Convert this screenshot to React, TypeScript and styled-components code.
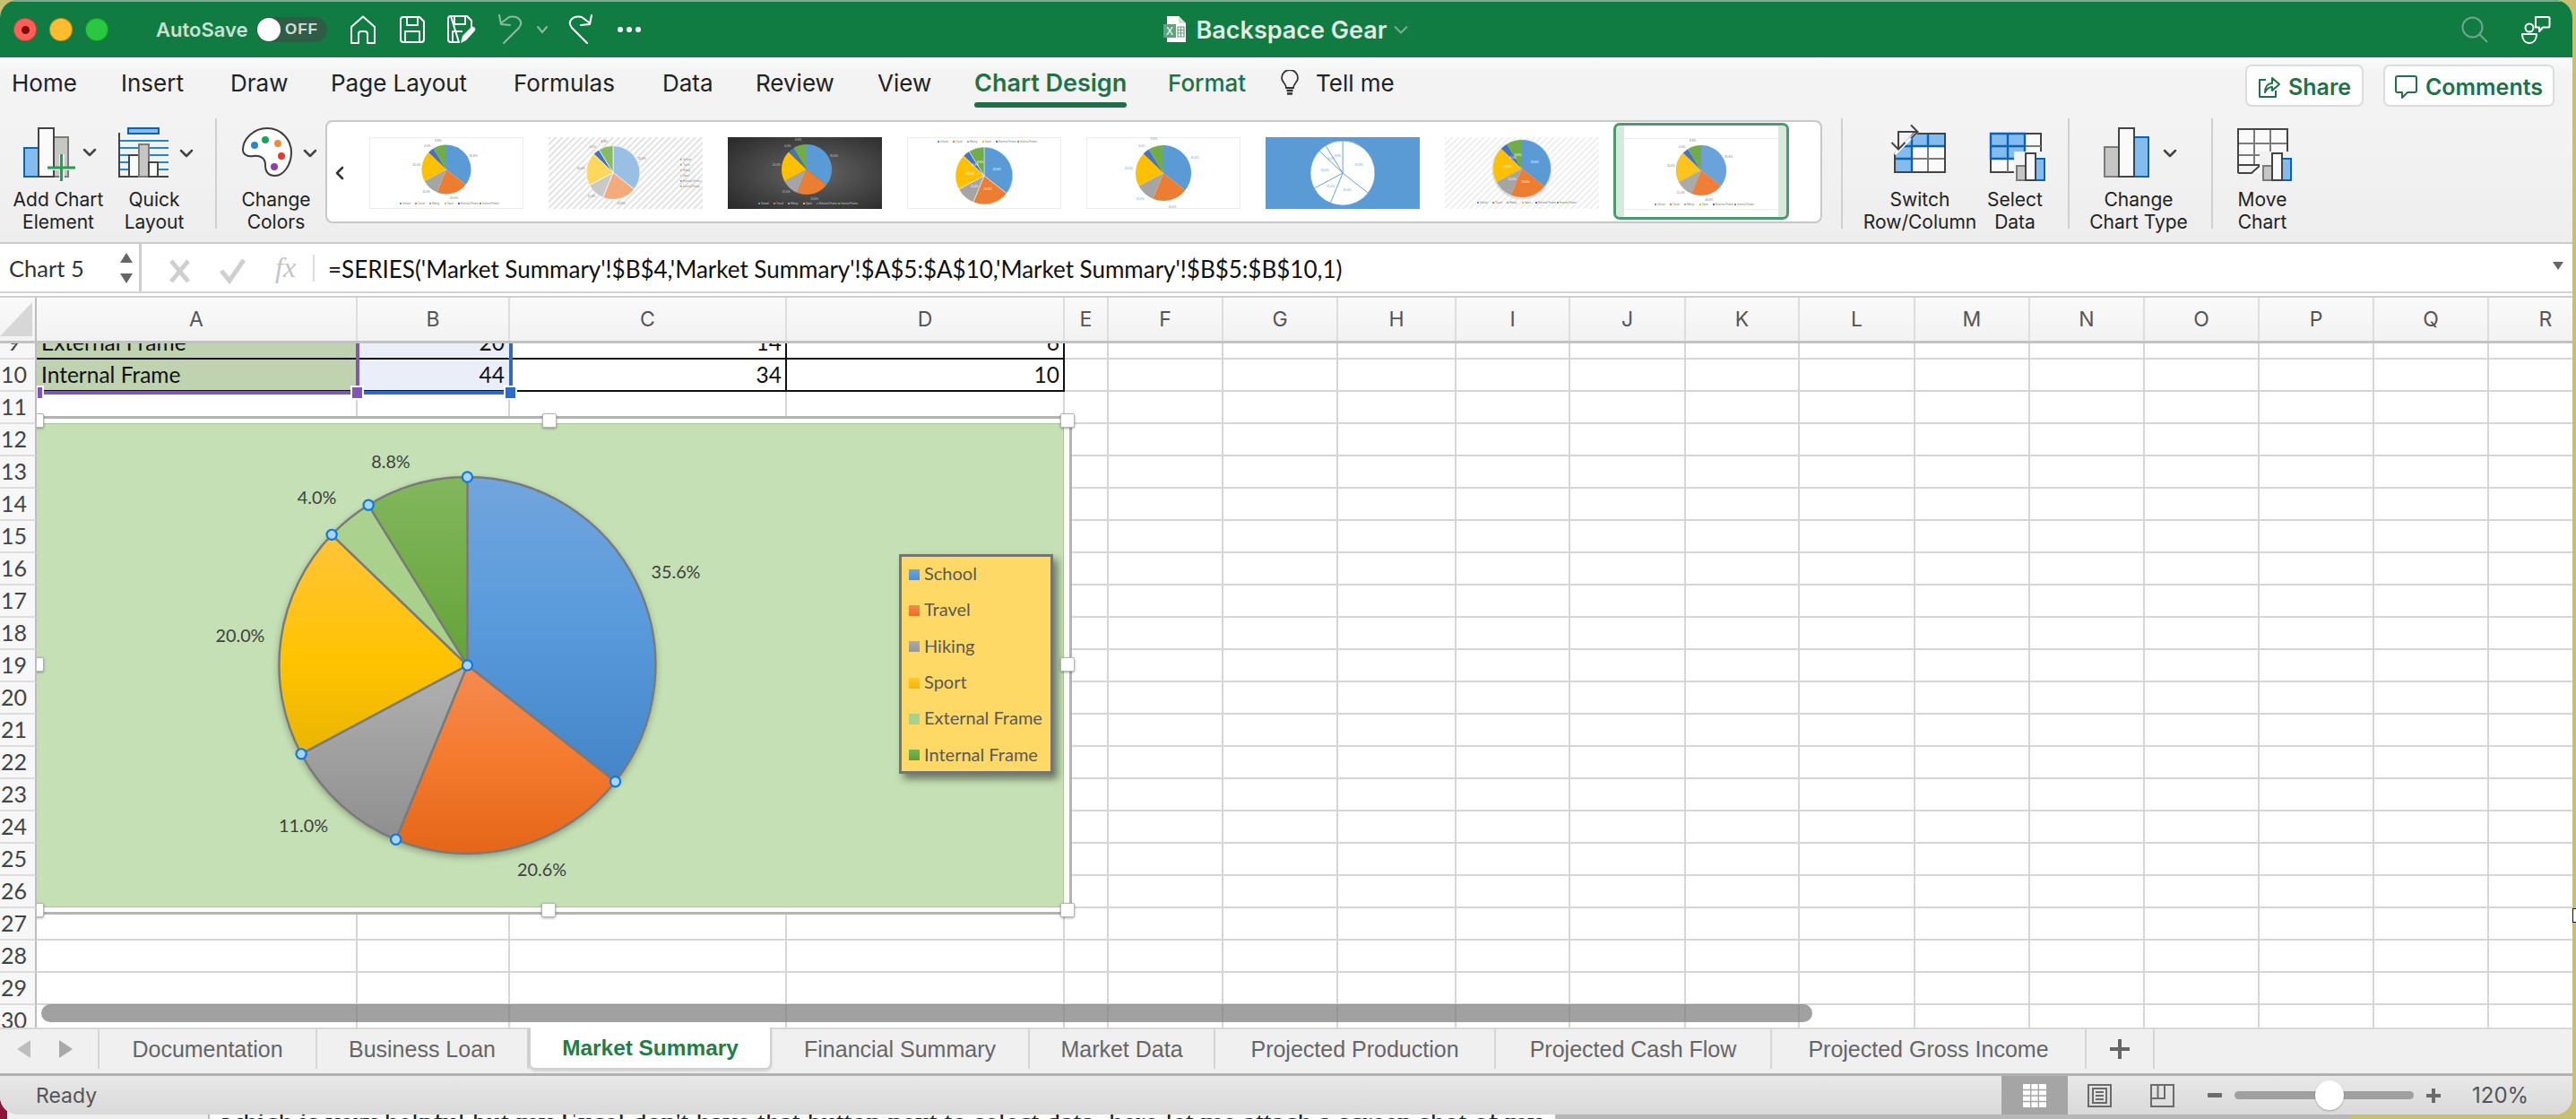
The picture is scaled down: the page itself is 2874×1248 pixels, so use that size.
import React from 'react';
import styled, { createGlobalStyle } from 'styled-components';

const Global = createGlobalStyle`
  html, body { margin: 0; padding: 0; background: #c9bf70; }
  * { box-sizing: border-box; }
  #root { width: 2874px; height: 1248px; }
`;

const UI = `Inter, "Liberation Sans", sans-serif`;
const HELV = `"Liberation Sans", Arial, sans-serif`;
const CAL = `Lato, "Open Sans", sans-serif`;
const GREEN = '#107c41';

const COLS: [string, number][] = [['A', 358], ['B', 170], ['C', 309], ['D', 310], ['E', 49], ['F', 128], ['G', 128], ['H', 132], ['I', 127], ['J', 129], ['K', 127], ['L', 129], ['M', 128], ['N', 128], ['O', 128], ['P', 128], ['Q', 128], ['R', 128]];
const TEMPLATE = `41px ${COLS.map(c => c[1] + 'px').join(' ')}`;

const Page = styled.div`
  position: relative; width: 2874px; height: 1248px; overflow: hidden; background: #c9bf70;
`;
const EdgeMark = styled.div`
  position: absolute; left: 2870px; top: 1013px; width: 4px; height: 16px; border: 1px solid #111; border-right: none; background: #fff;
`;
const DocStrip = styled.div`
  position: absolute; left: 0; top: 1226px; width: 2621px; height: 22px; background: #fff; overflow: hidden;
  font: 32px/32px "Liberation Serif", serif; color: #222; white-space: nowrap;
`;
const DocLeft = styled.div`
  position: absolute; left: 0; top: 0; bottom: 0; width: 234px; background: #efefef; border-right: 2px solid #bbb;
  &::before { content: ''; position: absolute; left: 0; top: 0; bottom: 0; width: 8px; background: #8a1538; }
`;
const DocRight = styled.div`
  position: absolute; left: 1735px; right: 0; top: 0; bottom: 0; background: #b8b8b8;
`;
const DocText = styled.div`
  position: absolute; left: 248px; top: 9px;
`;
const Win = styled.div`
  position: relative; z-index: 1; width: 2870px; height: 1243px; border-radius: 20px; overflow: hidden;
  display: flex; flex-direction: column; background: #f3f3f3;
`;

/* Title bar */
const TitleBar = styled.div`
  height: 64px; flex: none; background: ${GREEN}; border-top: 2px solid #7ea892;
  display: grid; grid-template-columns: 1fr auto 1fr; align-items: center;
`;
const TitleLeft = styled.div`display: flex; align-items: center; padding-left: 15px;`;
const TitleCenter = styled.div`display: flex; align-items: center; gap: 10px;`;
const TitleRight = styled.div`display: flex; align-items: center; justify-content: flex-end; gap: 36px; padding-right: 24px;`;
const Light = styled.span<{ $c: string; $ml?: number }>`
  width: 26px; height: 26px; border-radius: 50%; background: ${p => p.$c}; margin-left: ${p => p.$ml ?? 14}px;
  border: 1px solid rgba(0,0,0,.25); display: flex; align-items: center; justify-content: center; flex: none;
`;
const LightDot = styled.span`width: 9px; height: 9px; border-radius: 50%; background: #7c0f0c;`;
const AutoSave = styled.span`
  margin-left: 53px; font: 600 22px ${UI}; color: rgba(255,255,255,.78); width: 112px;
`;
const Toggle = styled.span`
  width: 79px; height: 28px; border-radius: 14px; background: #2e5c45; display: flex; align-items: center;
  padding-left: 1px; gap: 5px; flex: none;
`;
const Knob = styled.span`width: 26px; height: 26px; border-radius: 50%; background: #fff;`;
const OffText = styled.span`font: 600 17px ${HELV}; color: rgba(255,255,255,.8); letter-spacing: 1px;`;
const QuickIcon = styled.svg<{ $ml: number }>`margin-left: ${p => p.$ml}px; flex: none; display: block;`;
const DocName = styled.span`font: 600 27px ${UI}; color: rgba(255,255,255,.88); margin-right: -4px;`;

/* Tabs */
const TabRow = styled.div`
  height: 66px; flex: none; display: flex; align-items: flex-start; padding: 14px 20px 0 13px;
  background: linear-gradient(#fafafa, #f3f3f3 30%);
`;
const Tab = styled.div<{ $w: number }>`width: ${p => p.$w}px; flex: none;`;
const TabText = styled.span<{ $active?: boolean; $green?: boolean }>`
  position: relative; display: inline-block; font: ${p => (p.$active ? 600 : p.$green ? 500 : 400)} ${p => (p.$active ? 27 : 26)}px/30px ${UI};
  color: ${p => (p.$active || p.$green ? '#1f7246' : '#222')}; white-space: nowrap;
  ${p => p.$active ? `&::after { content: ''; position: absolute; left: 0; right: 0; top: 36px; height: 6px; border-radius: 3px; background: #1f6f4a; }` : ''}
`;
const Bulb = styled.svg`margin-right: 18px; flex: none; display: block;`;
const Actions = styled.div`margin-left: auto; display: flex; gap: 22px; margin-top: -6px;`;
const ActionBtn = styled.button<{ $w: number }>`
  width: ${p => p.$w}px; height: 47px; background: #fff; border: 2px solid #dcdcdc; border-radius: 7px;
  font: 600 25px ${UI}; color: #1f7246; display: flex; align-items: center; justify-content: center; gap: 9px; padding: 2px 0 0;
`;

/* Ribbon */
const Ribbon = styled.div`
  height: 142px; flex: none; display: flex; align-items: flex-start; padding-left: 8px;
  background: linear-gradient(#f3f3f3, #eeeeee); border-bottom: 2px solid #cbcbcb;
`;
const RibBtn = styled.div<{ $w: number; $ml?: number }>`
  width: ${p => p.$w}px; margin-left: ${p => p.$ml ?? 0}px; flex: none; display: flex; flex-direction: column; align-items: center;
  padding-top: 6px;
`;
const RibLabel = styled.div`
  margin-top: 3px; font: 400 21px/24.5px ${UI}; color: #222; text-align: center; white-space: nowrap;
`;
const RibSep = styled.div<{ $ml: number }>`
  width: 2px; height: 123px; margin-top: 2px; background: #d0d0d0; margin-left: ${p => p.$ml}px; flex: none;
`;
const Gallery = styled.div`
  width: 1670px; height: 115px; margin: 4px 0 0 10px; flex: none; background: #fff; border: 2px solid #c8c8c8; border-radius: 8px;
  display: flex; align-items: center; padding-top: 3px;
`;
const GalleryBack = styled.svg`width: 47px; height: 24px; flex: none; display: block;`;
const Thumbs = styled.div`display: flex; gap: 28px; align-items: center;`;
const ThumbSvg = styled.svg`display: block; flex: none;`;
const SelectedThumb = styled.div`
  margin-left: -12px; height: 108px; margin-top: -4px; border: 3px solid #4a9a6f; border-radius: 7px; background: #d8e8dd; padding: 0 9px; flex: none;
`;
const SelectedInner = styled.div`height: 100%; background: #fff; display: flex; align-items: center; padding-top: 5px;`;

/* Formula bar */
const FormulaBar = styled.div`
  height: 60px; flex: none; display: flex; background: #fff; border-bottom: 2px solid #cfcfcf;
  box-shadow: inset 0 -3px 0 #fff, inset 0 -5px 0 #d4d4d4; padding-bottom: 5px;
`;
const NameBox = styled.div`
  width: 158px; flex: none; border-right: 3px solid #cdcdcd; display: flex; align-items: center; justify-content: space-between;
  padding: 0 6px 0 10px; font: 400 25.5px ${CAL}; color: #333;
`;
const Spin = styled.svg`display: block; flex: none;`;
const FxArea = styled.div`flex: none; width: 190px; margin-left: 3px;`;
const FxIcons = styled.svg`display: block;`;
const FormulaText = styled.div`
  flex: 1; margin-left: 15px; font: 400 26px/56px ${CAL}; color: #111; white-space: nowrap;
`;
const FormulaCaret = styled.svg`flex: none; margin: 20px 10px 0 0; display: block;`;

/* Sheet */
const Sheet = styled.div`
  position: relative; height: 814px; flex: none; overflow: hidden; background: #fff;
`;
const ColHeader = styled.div`
  display: grid; grid-template-columns: ${TEMPLATE}; height: 51px; background: linear-gradient(#fafafa, #f2f2f2); border-bottom: 3px solid #c2c2c2;
`;
const ColCell = styled.div`
  border-right: 2px solid #dedede; display: flex; align-items: center; justify-content: center;
  font: 400 23px ${UI}; color: #555;
`;
const Corner = styled.div`
  border-right: 2px solid #bdbdbd; position: relative;
  &::after { content: ''; position: absolute; left: 0; bottom: 5px; border-style: solid; border-width: 0 0 38px 36px; border-color: transparent transparent #d7d7d7 transparent; }
`;
const Body = styled.div`display: grid; grid-template-columns: ${TEMPLATE};`;
const RowNum = styled.div<{ $h: number }>`
  position: relative; z-index: 5;
  height: ${p => p.$h}px; background: #f7f7f7; border-right: 2px solid #bdbdbd; border-bottom: 2px solid #dcdcdc; display: flex; align-items: flex-end;
  overflow: hidden;
`;
const RowNumText = styled.span`
  width: 31px; height: 36px; flex: none; font: 400 25px/37px ${CAL}; color: #444; text-align: center;
`;
const Cell = styled.div<{ $h: number; $bg?: string; $bb?: string; $br?: string; $right?: boolean }>`
  height: ${p => p.$h}px; background: ${p => p.$bg ?? '#fff'};
  border-right: 2px solid ${p => p.$br ?? '#d6d6d6'}; border-bottom: 2px solid ${p => p.$bb ?? '#d6d6d6'};
  display: flex; align-items: flex-end; overflow: hidden; justify-content: ${p => (p.$right ? 'flex-end' : 'flex-start')};
  padding: 0 ${p => (p.$right ? 4 : 0)}px 0 ${p => (p.$right ? 0 : 5)}px;
`;
const CellText = styled.span`
  height: 36px; flex: none; font: 400 24.5px/37px ${CAL}; color: #111; white-space: nowrap;
`;
const Sel = styled.div<{ $c: string; $x: number; $y: number; $w: number; $h: number }>`
  position: absolute; left: ${p => p.$x}px; top: ${p => p.$y - 332}px; width: ${p => p.$w}px; height: ${p => p.$h}px; background: ${p => p.$c};
`;
const SelHandle = styled(Sel)`outline: 2px solid #fff; z-index: 3;`;
const ChartFrame = styled.div`
  position: absolute; left: 41px; top: 132px; width: 1155px; height: 556px; background: #fff; z-index: 2;
  border: 3px solid #b4b4b4; border-left: none; padding: 5px 6px 5px 0;
`;
const ChartArea = styled.div`
  position: relative; width: 100%; height: 100%; background: #c5e0b4; border: 1px solid #abc89a; border-left: none;
`;
const ChartSvg = styled.svg`position: absolute; left: 0; top: 0; display: block;`;
const PieShadow = styled.circle`filter: blur(4px);`;
const Legend = styled.div`
  position: absolute; left: 962px; top: 145px; width: 172px; height: 245px; background: #ffd966; border: 3px solid #757575;
  box-shadow: 5px 6px 8px rgba(0,0,0,.45); display: flex; flex-direction: column; padding-left: 8px;
`;
const LegendItem = styled.div`height: 40.3px; flex: none; padding-bottom: 4px; display: flex; align-items: center; gap: 5px; font: 400 20px ${CAL}; color: #595959; white-space: nowrap;`;
const Swatch = styled.span<{ $a: string; $b: string }>`width: 12px; height: 12px; flex: none; margin-top: 3px; background: linear-gradient(${p => p.$a}, ${p => p.$b});`;
const Handle = styled.div<{ $x: number; $y: number }>`
  position: absolute; left: ${p => p.$x - 8}px; top: ${p => p.$y - 332 - 8}px; width: 16px; height: 16px; background: #fff;
  border: 1px solid #b5b5b5; border-radius: 2px; box-shadow: 0 1px 3px rgba(0,0,0,.35); z-index: 4;
`;
const ScrollThumb = styled.div`
  position: absolute; left: 46px; top: 788px; width: 1976px; height: 20px; border-radius: 10px; background: rgba(125,125,125,.72); z-index: 6;
`;

/* Sheet tabs */
const SheetTabs = styled.div`
  height: 54px; flex: none; display: flex; background: #f0f0f0; border-top: 2px solid #d8d8d8; border-bottom: 3px solid #b2b2b2; padding-bottom: 5px;
`;
const TabNav = styled.div`width: 111px; flex: none; border-right: 2px solid #d6d6d6; display: flex; align-items: center;`;
const NavSvg = styled.svg`display: block;`;
const SheetTab = styled.div<{ $active?: boolean; $w: number }>`
  width: ${p => p.$w}px; flex: none; display: flex; align-items: center; justify-content: center; font: ${p => (p.$active ? 700 : 400)} ${p => (p.$active ? 24.4 : 25)}px ${HELV};
  color: ${p => (p.$active ? '#1e7e4a' : '#666')}; white-space: nowrap;
  ${p => p.$active
    ? `background:#fff; border:2px solid #cfcfcf; border-top:none; border-radius:0 0 7px 7px; height:47px; margin-top:-2px; box-shadow:0 2px 3px rgba(0,0,0,.12);`
    : `border-right:2px solid #d6d6d6;`}
`;

/* Status */
const StatusBar = styled.div`
  flex: 1; display: flex; align-items: center; background: linear-gradient(#e8e8e8, #d9d9d9);
  padding-left: 40px; font: 400 23px ${UI}; color: #555;
`;
const StatusRight = styled.div`margin-left: auto; display: flex; align-items: center; height: 100%;`;
const ViewActive = styled.div`width: 74px; height: 100%; background: #a5a5a5; display: flex; align-items: center; justify-content: center;`;
const ViewBtn = styled.div`width: 70px; height: 100%; display: flex; align-items: center; justify-content: center;`;
const ZoomMinus = styled.svg`margin-left: 16px; display: block;`;
const Track = styled.div`width: 200px; height: 9px; border-radius: 5px; background: #a0a0a0; position: relative; margin: 0 14px;`;
const Thumb = styled.div`position: absolute; left: 90px; top: -12px; width: 32px; height: 33px; border-radius: 50%; background: #fff; box-shadow: 0 1px 2px rgba(0,0,0,.25);`;
const Zoom = styled.span`margin-left: 35px; width: 112px; font: 400 24px ${UI};`;

/* ---------- helpers ---------- */
const FR = [0, 128.16, 202.32, 241.92, 313.92, 328.32, 360];
const pt = (cx: number, cy: number, r: number, a: number) => {
  const t = (a * Math.PI) / 180;
  return [cx + r * Math.sin(t), cy - r * Math.cos(t)];
};
const slice = (cx: number, cy: number, r: number, a0: number, a1: number) => {
  const [x0, y0] = pt(cx, cy, r, a0);
  const [x1, y1] = pt(cx, cy, r, a1);
  return `M${cx} ${cy}L${x0.toFixed(2)} ${y0.toFixed(2)}A${r} ${r} 0 ${a1 - a0 > 180 ? 1 : 0} 1 ${x1.toFixed(2)} ${y1.toFixed(2)}Z`;
};
const Chev = ({ x, y, c = '#444', s = 6, w = 2.5 }: { x: number; y: number; c?: string; s?: number; w?: number }) => (
  <path d={`M${x - s} ${y - s / 2}L${x} ${y + s / 2}L${x + s} ${y - s / 2}`} fill="none" stroke={c} strokeWidth={w} strokeLinecap="round" strokeLinejoin="round" />
);
const BLUE = '#83bcef', DBLUE = '#0f62b0', DARK = '#444', MID = '#7b7b7b', LG = '#c6c6c4', W = '#fafafa';
const B = ({ x, y, w, h, f, s }: { x: number; y: number; w: number; h: number; f: string; s: string }) => (
  <rect x={x} y={y} width={w} height={h} fill={f} stroke={s} strokeWidth={2} />
);

const LEG = ['School', 'Travel', 'Hiking', 'Sport', 'External Frame', 'Internal Frame'];
const BASE = ['#5b9bd5', '#ed7d31', '#a5a5a5', '#ffc000', '#4472c4', '#70ad47'];
const LEGX = [0, 17, 33, 50, 65, 89];

const MiniPie = ({ cx, cy, r, colors = BASE, stroke = 'none', sw = 0 }: { cx: number; cy: number; r: number; colors?: string[]; stroke?: string; sw?: number }) => (
  <g>
    {colors.map((c, i) => <path key={i} d={slice(cx, cy, r, FR[i], FR[i + 1])} fill={c} stroke={stroke} strokeWidth={sw} />)}
  </g>
);
const PCT = ['35.6%', '20.6%', '11.0%', '20.0%', '4.0%', '8.8%'];
const MiniLabels = ({ cx, cy, r, fill = '#777' }: { cx: number; cy: number; r: number; fill?: string }) => (
  <g fontFamily={HELV} fontSize="3.2" fill={fill} textAnchor="middle">
    {PCT.map((p, i) => {
      const [x, y] = pt(cx, cy, r + 6, (FR[i] + FR[i + 1]) / 2);
      return <text key={p} x={x} y={y + 1}>{p}</text>;
    })}
  </g>
);
const MiniLegendH = ({ x, y, fill = '#777', colors = BASE }: { x: number; y: number; fill?: string; colors?: string[] }) => (
  <g fontFamily={HELV} fontSize="2.9" fill={fill}>
    {LEG.map((l, i) => (
      <g key={l}>
        <rect x={x + LEGX[i]} y={y - 2} width={2} height={2} fill={colors[i]} />
        <text x={x + LEGX[i] + 3} y={y}>{l}</text>
      </g>
    ))}
  </g>
);
const MiniLegendV = ({ x, y }: { x: number; y: number }) => (
  <g fontFamily={HELV} fontSize="2.9" fill="#888">
    {LEG.map((l, i) => (
      <g key={l}>
        <rect x={x} y={y + i * 6 - 2} width={1.6} height={1.6} fill={BASE[i]} />
        <text x={x + 3} y={y + i * 6}>{l}</text>
      </g>
    ))}
  </g>
);

const Thumbnail = ({ kind }: { kind: number }) => {
  const hatchId = `hatch${kind}`;
  return (
    <ThumbSvg width={172} height={80} viewBox="0 0 172 80">
      <defs>
        <pattern id={hatchId} width="5" height="5" patternUnits="userSpaceOnUse" patternTransform="rotate(45)">
          <rect width="5" height="5" fill="#fff" />
          <rect width="2" height="5" fill={kind === 7 ? '#eeeeee' : '#e2e2e2'} />
        </pattern>
        <radialGradient id="dk" cx="55%" cy="50%" r="70%">
          <stop offset="0" stopColor="#666" />
          <stop offset="1" stopColor="#2b2b2b" />
        </radialGradient>
      </defs>
      {kind === 1 && (<>
        <rect x=".5" y=".5" width="171" height="79" fill="#fff" stroke="#ececec" />
        <MiniPie cx={86} cy={36} r={27.5} />
        <MiniLabels cx={86} cy={36} r={27.5} />
        <MiniLegendH x={34} y={75} />
      </>)}
      {kind === 2 && (<>
        <rect width="172" height="80" fill={`url(#${hatchId})`} />
        <MiniPie cx={72} cy={39.5} r={30} colors={['#99bfe5', '#f3ab7c', '#c9c9c9', '#ffd75a', '#4472c4', '#86bb60']} stroke="#fff" sw={.7} />
        <MiniLabels cx={72} cy={39.5} r={30} />
        <MiniLegendV x={147} y={26} />
      </>)}
      {kind === 3 && (<>
        <rect width="172" height="80" fill="url(#dk)" />
        <MiniPie cx={88} cy={36} r={28} />
        <MiniLabels cx={88} cy={36} r={28} fill="#ccc" />
        <MiniLegendH x={34} y={75} fill="#ccc" />
      </>)}
      {kind === 4 && (<>
        <rect x=".5" y=".5" width="171" height="79" fill="#fff" stroke="#ececec" />
        <MiniPie cx={86} cy={43} r={32} stroke="#fff" sw={.5} />
        <MiniLabels cx={86} cy={43} r={10} fill="#fff" />
        <MiniLegendH x={34} y={6} />
      </>)}
      {kind === 5 && (<>
        <rect x=".5" y=".5" width="171" height="79" fill="#fff" stroke="#ececec" />
        <MiniPie cx={86} cy={40} r={31} />
        <MiniLabels cx={86} cy={40} r={33} fill="#5b9bd5" />
      </>)}
      {kind === 6 && (<>
        <rect width="172" height="80" fill="#5b9bd5" />
        <MiniPie cx={86} cy={40} r={36} colors={['#fff', '#fff', '#fff', '#fff', '#fff', '#fff']} stroke="#5b9bd5" sw={.7} />
        <MiniLabels cx={86} cy={40} r={14} fill="#5b9bd5" />
      </>)}
      {kind === 7 && (<>
        <rect width="172" height="80" fill={`url(#${hatchId})`} />
        <circle cx="86" cy="36" r="33.5" fill="#bbb" opacity=".45" />
        <MiniPie cx={86} cy={35} r={32} />
        <MiniLabels cx={86} cy={35} r={10} fill="#fff" />
        <MiniLegendH x={36} y={74} />
      </>)}
      {kind === 8 && (<>
        <rect width="172" height="80" fill="#fff" />
        <path d="M0 .5H172M0 79.5H172" stroke="#ececec" />
        <MiniPie cx={86} cy={36} r={28} colors={['#6aa3dc', '#f07f35', '#aaa', '#ffc41c', '#4472c4', '#70ad47']} stroke="#999" sw={.3} />
        <MiniLabels cx={86} cy={36} r={28} />
        <MiniLegendH x={34} y={75} />
      </>)}
    </ThumbSvg>
  );
};

/* ---------- sheet data ---------- */
const ROWS = Array.from({ length: 22 }, (_, i) => i + 9);
const TABLE: Record<number, string[]> = { 9: ['External Frame', '20', '14', '6'], 10: ['Internal Frame', '44', '34', '10'] };
const BLACK = '#111';

const cellProps = (row: number, col: number) => {
  const p: { $bg?: string; $bb?: string; $br?: string; $right?: boolean } = {};
  if (TABLE[row] && col < 4) {
    p.$bb = BLACK;
    p.$right = col > 0;
    if (col === 0) { p.$bg = '#bfd3b0'; p.$br = '#bfd3b0'; }
    if (col === 1) { p.$bg = '#e9eef9'; p.$br = '#e9eef9'; }
    if (col >= 2) p.$br = BLACK;
  }
  return p;
};

const TABS: [string, number, boolean?][] = [
  ['Documentation', 243], ['Business Loan', 236], ['Market Summary', 271, true], ['Financial Summary', 288], ['Market Data', 207], ['Projected Production', 313], ['Projected Cash Flow', 308], ['Projected Gross Income', 351],
];

const PIE_CX = 521.4, PIE_CY = 742, PIE_R = 210;
const PIE_FILLS = ['pb', 'po', 'pg', 'py', 'pl', 'pd'];

export default function App() {
  return (
    <Page>
      <Global />
      <EdgeMark />
      <DocStrip>
        <DocLeft />
        <DocRight />
        <DocText>which is very helpful but my Excel don't have that button next to select data, here let me attach a screen shot of my</DocText>
      </DocStrip>
      <Win>
        <TitleBar>
          <TitleLeft>
            <Light $c="#ff5f57" $ml={0}><LightDot /></Light>
            <Light $c="#febc2e" />
            <Light $c="#28c840" />
            <AutoSave>AutoSave</AutoSave>
            <Toggle><Knob /><OffText>OFF</OffText></Toggle>
            <QuickIcon $ml={25} width={30} height={32} viewBox="0 0 30 32" fill="none" stroke="#fff" strokeWidth="2" strokeLinejoin="round">
              <path d="M2 31V13L15 1.5 28 13V31H20V21a3 3 0 0 0-3-3h-4a3 3 0 0 0-3 3V31Z" />
            </QuickIcon>
            <QuickIcon $ml={26} width={28} height={30} viewBox="0 0 28 30" fill="none" stroke="#fff" strokeWidth="2" strokeLinejoin="round">
              <path d="M4 1H22L27 6V26a3 3 0 0 1-3 3H4a3 3 0 0 1-3-3V4a3 3 0 0 1 3-3Z" />
              <path d="M8 1V10H20V1M6 29V17H22V29" />
            </QuickIcon>
            <QuickIcon $ml={25} width={32} height={32} viewBox="0 0 32 32" fill="none" stroke="#fff" strokeWidth="2" strokeLinejoin="round">
              <path d="M4 1H22L27 6V14M13 30H4a3 3 0 0 1-3-3V4a3 3 0 0 1 3-3Z" />
              <path d="M8 1V10H20V1M6 30V18H17" />
              <path d="M15 31l2-8L27 13a3 3 0 0 1 4 4L21 28Z" fill="#fff" stroke="none" />
            </QuickIcon>
            <QuickIcon $ml={24} width={30} height={34} viewBox="0 0 30 34" fill="none" stroke="#8cbda2" strokeWidth="2" strokeLinecap="round" strokeLinejoin="round">
              <path d="M7 32L24 15C30 7 22 1 13 3L5 9" />
              <path d="M2 1L4 11L14 12" />
            </QuickIcon>
            <QuickIcon $ml={13} width={14} height={10} viewBox="0 0 14 10" fill="none" stroke="#8cbda2" strokeWidth="2" strokeLinecap="round"><path d="M2 2L7 8L12 2" /></QuickIcon>
            <QuickIcon $ml={20} width={30} height={34} viewBox="0 0 30 34" fill="none" stroke="#fff" strokeWidth="2" strokeLinecap="round" strokeLinejoin="round">
              <path d="M23 32L6 15C0 7 8 1 17 3L25 9" />
              <path d="M28 1L26 11L16 12" />
            </QuickIcon>
            <QuickIcon $ml={26} width={28} height={8} viewBox="0 0 28 8" fill="#fff"><circle cx="4" cy="4" r="3" /><circle cx="14" cy="4" r="3" /><circle cx="24" cy="4" r="3" /></QuickIcon>
          </TitleLeft>
          <TitleCenter>
            <svg width="26" height="30" viewBox="0 0 26 30">
              <path d="M4 0H17L25 8V29H4Z" fill="#fff" />
              <path d="M17 0V8H25Z" fill="#cfe3d8" />
              <rect x="0" y="9" width="14" height="15" fill="#5da37f" />
              <text x="7" y="21" fontSize="12" fontFamily={HELV} fill="#fff" textAnchor="middle">X</text>
              <path d="M16 12h7v11h-7zM16 15.5h7M16 19h7M19.5 12v11" fill="none" stroke="#5da37f" strokeWidth="1.2" />
            </svg>
            <DocName>Backspace Gear</DocName>
            <svg width="18" height="10" viewBox="0 0 18 10" fill="none" stroke="#76b094" strokeWidth="2"><path d="M2 1.5L9 8.5L16 1.5" /></svg>
          </TitleCenter>
          <TitleRight>
            <svg width="30" height="30" viewBox="0 0 30 30" fill="none" stroke="#6fa88b" strokeWidth="2"><circle cx="12.5" cy="12.5" r="11" /><path d="M20.5 20.5L29 29" /></svg>
            <svg width="34" height="32" viewBox="0 0 34 32" fill="none" stroke="#fff" strokeWidth="2" strokeLinejoin="round">
              <circle cx="10" cy="14" r="4.5" />
              <path d="M2 21H18C18 27 15 31 10 31S2 27 2 21Z" />
              <path d="M17 2H31a1.5 1.5 0 0 1 1.5 1.5V12a1.5 1.5 0 0 1-1.5 1.5H25L21 18V13.5H17Z" />
            </svg>
          </TitleRight>
        </TitleBar>

        <TabRow>
          <Tab $w={122}><TabText>Home</TabText></Tab>
          <Tab $w={122}><TabText>Insert</TabText></Tab>
          <Tab $w={112}><TabText>Draw</TabText></Tab>
          <Tab $w={204}><TabText>Page Layout</TabText></Tab>
          <Tab $w={166}><TabText>Formulas</TabText></Tab>
          <Tab $w={104}><TabText>Data</TabText></Tab>
          <Tab $w={136}><TabText>Review</TabText></Tab>
          <Tab $w={108}><TabText>View</TabText></Tab>
          <Tab $w={216}><TabText $active>Chart Design</TabText></Tab>
          <Tab $w={125}><TabText $green>Format</TabText></Tab>
          <Bulb width={22} height={30} viewBox="0 0 22 30" fill="none" stroke="#333" strokeWidth="1.8">
            <path d="M7 20C7 15 2 14 2 9a9 9 0 0 1 18 0C20 14 15 15 15 20Z" />
            <path d="M7.5 23H14.5M8 26.5H14" strokeWidth="2.4" />
          </Bulb>
          <Tab $w={100}><TabText>Tell me</TabText></Tab>
          <Actions>
            <ActionBtn $w={132}>
              <svg width="25" height="24" viewBox="0 0 25 24" fill="none" stroke="#1f7246" strokeWidth="2" strokeLinejoin="round">
                <path d="M9 4H2V23H20V16" />
                <path d="M8 18C8 12 11 8 16 8V2L24 9L16 16V12C12 12 10 14 8 18Z" />
              </svg>
              Share
            </ActionBtn>
            <ActionBtn $w={191}>
              <svg width="25" height="26" viewBox="0 0 25 26" fill="none" stroke="#1f7246" strokeWidth="2" strokeLinejoin="round">
                <path d="M3 1H22a2 2 0 0 1 2 2V17a2 2 0 0 1-2 2H14L8 25V19H3a2 2 0 0 1-2-2V3a2 2 0 0 1 2-2Z" />
              </svg>
              Comments
            </ActionBtn>
          </Actions>
        </TabRow>

        <Ribbon>
          <RibBtn $w={114}>
            <svg width={114} height={72} viewBox="8 136 114 72">
              <B x={27} y={165} w={16} h={32} f={BLUE} s={DBLUE} />
              <B x={60} y={153} w={16} h={44} f={LG} s={MID} />
              <B x={43} y={143} w={17} h={54} f={W} s={DARK} />
              <path d="M52 186H84V190H72V202H66V190H52Z M66 172H72V186H66Z" fill="#f3f3f3" opacity=".9" />
              <path d="M68.5 172V202M53 187H84" stroke="#1aa550" strokeWidth="3" />
              <Chev x={100} y={170} />
            </svg>
            <RibLabel>Add Chart<br />Element</RibLabel>
          </RibBtn>
          <RibBtn $w={96} $ml={2}>
            <svg width={96} height={72} viewBox="124 136 96 72">
              <rect x={143} y={143} width={34} height={6} fill={BLUE} stroke={DBLUE} strokeWidth={2} />
              <path d="M134 157H188M134 165H188M134 173H188M134 181H188M134 189H188" stroke="#1f86cf" strokeWidth="2" />
              <path d="M133 148V197H188" fill="none" stroke={DARK} strokeWidth="2" />
              <B x={144} y={173} w={11} h={24} f={W} s={DARK} />
              <B x={155} y={161} w={11} h={36} f={LG} s={MID} />
              <B x={166} y={181} w={10} h={16} f={W} s={DARK} />
              <Chev x={208} y={171} />
            </svg>
            <RibLabel>Quick<br />Layout</RibLabel>
          </RibBtn>
          <RibSep $ml={20} />
          <RibBtn $w={90} $ml={21}>
            <svg width={90} height={72} viewBox="263 136 90 72">
              <path d="M298 143C314 143 325 156 325 170C325 184 316 196 307 196C300 196 296 192 296 184C296 176 290 173 283 174C277 175 271 173 271 167C271 155 283 143 298 143Z" fill="#fff" stroke="#3c3c3c" strokeWidth="2" />
              <circle cx="284" cy="162" r="4" fill="#2a85d0" />
              <circle cx="296" cy="156" r="4" fill="#18a557" />
              <circle cx="310" cy="160" r="4" fill="#f28a3c" />
              <circle cx="314" cy="174" r="4" fill="#e53a2f" />
              <circle cx="306" cy="186" r="4" fill="#8c3fa9" />
              <Chev x={346} y={171} />
            </svg>
            <RibLabel>Change<br />Colors</RibLabel>
          </RibBtn>
          <Gallery>
            <GalleryBack viewBox="0 0 47 24"><path d="M17 6L11 12L17 18" fill="none" stroke="#333" strokeWidth="2.6" strokeLinecap="round" strokeLinejoin="round" /></GalleryBack>
            <Thumbs>
              {[1, 2, 3, 4, 5, 6, 7].map(k => <Thumbnail key={k} kind={k} />)}
              <SelectedThumb>
                <SelectedInner><Thumbnail kind={8} /></SelectedInner>
              </SelectedThumb>
            </Thumbs>
          </Gallery>
          <RibSep $ml={21} />
          <RibBtn $w={124} $ml={24}>
            <svg width={124} height={72} viewBox="2080 136 124 72">
              <rect x={2114} y={149} width={56} height={43} fill={W} />
              <path d="M2114 149H2170V163H2133V192H2114Z" fill={BLUE} />
              <path d="M2133 177H2170M2151 163V192M2133 177V192" stroke={MID} strokeWidth="2" />
              <path d="M2114 163H2170M2114 177H2133M2133 149V192M2151 149V163" stroke={DBLUE} strokeWidth="2.4" />
              <rect x={2114} y={149} width={56} height={43} fill="none" stroke={DARK} strokeWidth="2" />
              <path d="M2104 138H2144L2112 172H2104Z" fill="#f3f3f3" />
              <path d="M2114 172L2142 144" stroke="#fff" strokeWidth="3" />
              <path d="M2118 166V147H2139M2132 139.5L2139.5 147L2132 154.5M2110.5 159L2118 166.5L2125.5 159" fill="none" stroke={DARK} strokeWidth="2" />
            </svg>
            <RibLabel>Switch<br />Row/Column</RibLabel>
          </RibBtn>
          <RibBtn $w={80} $ml={4}>
            <svg width={80} height={72} viewBox="2208 136 80 72">
              <rect x={2221} y={149} width={56} height={43} fill={W} stroke={DARK} strokeWidth="2" />
              <rect x={2221} y={149} width={38} height={28} fill={BLUE} />
              <path d="M2240 177V192M2259 163H2277" stroke={MID} strokeWidth="2" />
              <path d="M2221 149H2259V177H2221ZM2221 163H2259M2240 149V177" fill="none" stroke={DBLUE} strokeWidth="2.4" />
              <rect x={2247} y={169} width={36} height={34} fill="#f3f3f3" />
              <B x={2250} y={185} w={10} h={16} f={LG} s={MID} />
              <B x={2271} y={177} w={10} h={24} f={BLUE} s={DBLUE} />
              <B x={2260} y={171} w={11} h={30} f={W} s={DARK} />
            </svg>
            <RibLabel>Select<br />Data</RibLabel>
          </RibBtn>
          <RibSep $ml={19} />
          <RibBtn $w={130} $ml={12}>
            <svg width={130} height={72} viewBox="2321 136 130 72">
              <B x={2348} y={164} w={16} h={33} f={LG} s={MID} />
              <B x={2381} y={153} w={16} h={44} f={BLUE} s={DBLUE} />
              <B x={2364} y={143} w={17} h={54} f={W} s={DARK} />
              <Chev x={2421} y={171} />
            </svg>
            <RibLabel>Change<br />Chart Type</RibLabel>
          </RibBtn>
          <RibSep $ml={16} />
          <RibBtn $w={80} $ml={15}>
            <svg width={80} height={72} viewBox="2484 136 80 72">
              <path d="M2497 144H2552V193H2510L2521 184H2497Z" fill={W} />
              <path d="M2515 144V184M2533 144V184M2497 160H2552M2497 173H2552" stroke={MID} strokeWidth="2" />
              <path d="M2497 193V144H2552V172M2497 184H2522L2512 193H2497" fill="none" stroke={DARK} strokeWidth="2" />
              <rect x={2521} y={169} width={38} height={34} fill="#f1f1f1" />
              <B x={2525} y={185} w={10} h={16} f={LG} s={MID} />
              <B x={2546} y={177} w={10} h={24} f={BLUE} s={DBLUE} />
              <B x={2535} y={171} w={11} h={30} f={W} s={DARK} />
            </svg>
            <RibLabel>Move<br />Chart</RibLabel>
          </RibBtn>
        </Ribbon>

        <FormulaBar>
          <NameBox>
            Chart 5
            <Spin width={16} height={36} viewBox="0 0 16 36" fill="#666"><path d="M8 1L15 12H1ZM8 35L1 24H15Z" /></Spin>
          </NameBox>
          <FxArea>
            <FxIcons width={190} height={52} viewBox="161 274 190 52">
              <path d="M191 293L210 316M210 293L191 316" stroke="#cfcfcf" strokeWidth="5" fill="none" />
              <path d="M247 304L256 315L272 292" stroke="#cfcfcf" strokeWidth="5" fill="none" />
              <text x="307" y="311" fontFamily={'"Liberation Serif", serif'} fontStyle="italic" fontSize="32" fill="#c4c4c4">fx</text>
              <path d="M350 286V316" stroke="#dcdcdc" strokeWidth="2" />
            </FxIcons>
          </FxArea>
          <FormulaText>=SERIES('Market Summary'!$B$4,'Market Summary'!$A$5:$A$10,'Market Summary'!$B$5:$B$10,1)</FormulaText>
          <FormulaCaret width={12} height={9} viewBox="0 0 12 9" fill="#666"><path d="M0 0H12L6 9Z" /></FormulaCaret>
        </FormulaBar>

        <Sheet>
          <ColHeader>
            <Corner />
            {COLS.map(([c]) => <ColCell key={c}>{c}</ColCell>)}
          </ColHeader>
          <Body>
            {ROWS.map(r => {
              const h = r === 9 ? 18 : 36;
              return (
                <React.Fragment key={r}>
                  <RowNum $h={h}><RowNumText>{r}</RowNumText></RowNum>
                  {COLS.map(([c], i) => (
                    <Cell key={c} $h={h} {...cellProps(r, i)}>
                      {TABLE[r] && i < 4 ? <CellText>{TABLE[r][i]}</CellText> : null}
                    </Cell>
                  ))}
                </React.Fragment>
              );
            })}
          </Body>

          <Sel $c="#7f57b5" $x={397} $y={383} $w={4} $h={50} />
          <Sel $c="#7f57b5" $x={48} $y={436} $w={345} $h={4} />
          <SelHandle $c="#7f57b5" $x={393} $y={432} $w={11} $h={12} />
          <SelHandle $c="#7f57b5" $x={42} $y={432} $w={5} $h={12} />
          <Sel $c="#2e6bc6" $x={568} $y={383} $w={4} $h={48} />
          <Sel $c="#2e6bc6" $x={406} $y={436} $w={156} $h={4} />
          <SelHandle $c="#2e6bc6" $x={564} $y={432} $w={11} $h={12} />

          <ChartFrame>
            <ChartArea>
              <ChartSvg width={1148} height={539} viewBox="41 473 1148 539">
                <defs>
                  <linearGradient id="pb" gradientUnits="userSpaceOnUse" x1="0" y1="531" x2="0" y2="880">
                    <stop offset="0" stopColor="#72a5dc" /><stop offset=".45" stopColor="#5a9bdc" /><stop offset="1" stopColor="#4384c7" />
                  </linearGradient>
                  <linearGradient id="po" gradientUnits="userSpaceOnUse" x1="0" y1="742" x2="0" y2="951">
                    <stop offset="0" stopColor="#f48b52" /><stop offset=".5" stopColor="#f47a2e" /><stop offset="1" stopColor="#e56618" />
                  </linearGradient>
                  <linearGradient id="pg" gradientUnits="userSpaceOnUse" x1="0" y1="742" x2="0" y2="940">
                    <stop offset="0" stopColor="#b1b1b1" /><stop offset="1" stopColor="#8e8e8e" />
                  </linearGradient>
                  <linearGradient id="py" gradientUnits="userSpaceOnUse" x1="0" y1="590" x2="0" y2="840">
                    <stop offset="0" stopColor="#ffc43c" /><stop offset=".6" stopColor="#ffc300" /><stop offset="1" stopColor="#e9b503" />
                  </linearGradient>
                  <linearGradient id="pl" gradientUnits="userSpaceOnUse" x1="0" y1="560" x2="0" y2="740">
                    <stop offset="0" stopColor="#abd28e" /><stop offset="1" stopColor="#a6d08a" />
                  </linearGradient>
                  <linearGradient id="pd" gradientUnits="userSpaceOnUse" x1="0" y1="531" x2="0" y2="742">
                    <stop offset="0" stopColor="#83b75e" /><stop offset="1" stopColor="#62a337" />
                  </linearGradient>
                </defs>
                <PieShadow cx={PIE_CX} cy={PIE_CY + 3} r={PIE_R} fill="#000" opacity=".35" />
                {PIE_FILLS.map((f, i) => (
                  <path key={f} d={slice(PIE_CX, PIE_CY, PIE_R, FR[i], FR[i + 1])} fill={`url(#${f})`} stroke="#7a7a7a" strokeWidth="2.4" strokeLinejoin="round" />
                ))}
                {[...FR.slice(0, 6).map(a => pt(PIE_CX, PIE_CY, PIE_R, a)), [PIE_CX, PIE_CY]].map(([x, y], i) => (
                  <circle key={i} cx={x} cy={y} r={5.6} fill="#a9d2f6" stroke="#0a7be0" strokeWidth="2.2" />
                ))}
                <g fontFamily={CAL} fontSize="19.8" fill="#404040" textAnchor="middle">
                  <text x={436} y={522}>8.8%</text>
                  <text x={353.6} y={562}>4.0%</text>
                  <text x={754} y={644.7}>35.6%</text>
                  <text x={268} y={716}>20.0%</text>
                  <text x={338.6} y={928}>11.0%</text>
                  <text x={604.6} y={977}>20.6%</text>
                </g>
              </ChartSvg>
              <Legend>
                {LEG.map((l, i) => (
                  <LegendItem key={l}>
                    <Swatch $a={['#6aa5e0', '#f48b52', '#ababab', '#ffc62c', '#a9d18e', '#78b64e'][i]} $b={['#4d8fd3', '#ea6d1e', '#969696', '#f2b800', '#a9d18e', '#5f9f34'][i]} />
                    {l}
                  </LegendItem>
                ))}
              </Legend>
            </ChartArea>
          </ChartFrame>
          <Handle $x={613} $y={469} />
          <Handle $x={1191} $y={469} />
          <Handle $x={1191} $y={741} />
          <Handle $x={1191} $y={1015} />
          <Handle $x={612} $y={1015} />
          <Handle $x={41} $y={469} />
          <Handle $x={41} $y={741} />
          <Handle $x={41} $y={1015} />
          <ScrollThumb />
        </Sheet>

        <SheetTabs>
          <TabNav>
            <NavSvg width={109} height={40} viewBox="0 0 109 40">
              <path d="M34 10V30L19 20Z" fill="#bdbdbd" />
              <path d="M66 10V30L81 20Z" fill="#a9a9a9" />
            </NavSvg>
          </TabNav>
          {TABS.map(([t, w, a]) => <SheetTab key={t} $w={w} $active={a}>{t}</SheetTab>)}
          <SheetTab $w={76}>
            <svg width="22" height="22" viewBox="0 0 22 22" fill="#666"><path d="M9 0H13V9H22V13H13V22H9V13H0V9H9Z" /></svg>
          </SheetTab>
        </SheetTabs>

        <StatusBar>
          Ready
          <StatusRight>
            <ViewActive>
              <svg width="26" height="26" viewBox="0 0 26 26" fill="#fff"><rect width="26" height="26" rx="1" /><path d="M0 6.5H26M0 13H26M0 19.5H26M8.7 0V26M17.3 0V26" stroke="#a5a5a5" strokeWidth="1.4" /></svg>
            </ViewActive>
            <ViewBtn>
              <svg width="27" height="26" viewBox="0 0 27 26" fill="none" stroke="#6b6b6b" strokeWidth="2"><rect x="1" y="1" width="25" height="24" /><rect x="6" y="5" width="15" height="16" /><path d="M9 9H18M9 13H18M9 17H18" /></svg>
            </ViewBtn>
            <ViewBtn>
              <svg width="27" height="26" viewBox="0 0 27 26" fill="none" stroke="#6b6b6b" strokeWidth="2"><path d="M1 1H26V25H1ZM1 16H16V1M8.5 1V16" /></svg>
            </ViewBtn>
            <ZoomMinus width="16" height="5" viewBox="0 0 16 5"><rect width="16" height="5" fill="#6b6b6b" rx="1" /></ZoomMinus>
            <Track><Thumb /></Track>
            <svg width="16" height="16" viewBox="0 0 16 16" fill="#6b6b6b"><path d="M6 0H10V6H16V10H10V16H6V10H0V6H6Z" /></svg>
            <Zoom>120%</Zoom>
          </StatusRight>
        </StatusBar>
      </Win>
    </Page>
  );
}
